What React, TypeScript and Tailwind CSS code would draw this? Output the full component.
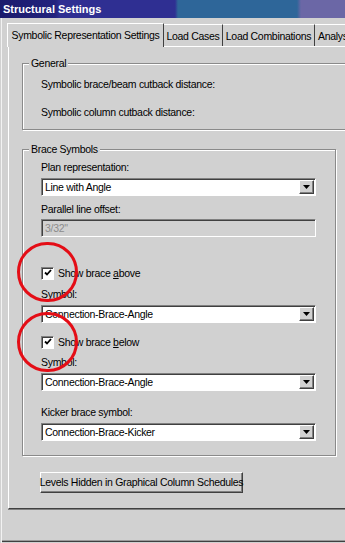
import React from 'react';

const ui = "font-['Liberation_Sans',Arial,sans-serif] text-[10.5px] tracking-[-0.3px] leading-[14px] text-black whitespace-nowrap";

function Select({ value }: { value: string }) {
  return (
    <div className="h-[18px] w-[275px] flex bg-white border border-t-[#808080] border-l-[#808080] border-b-white border-r-white shadow-[inset_1px_1px_0_#404040]">
      <div className="flex-1 pl-[3px] pt-[1px] leading-[15px] truncate">{value}</div>
      <div className="w-[15px] h-[14px] mt-[1px] mr-[1px] bg-[#d1d1d1] border border-t-white border-l-white border-b-[#404040] border-r-[#404040] shadow-[inset_-1px_-1px_0_#808080] flex items-center justify-center">
        <svg width="7" height="4" viewBox="0 0 7 4">
          <path d="M0 0h7L3.5 4z" fill="#000" />
        </svg>
      </div>
    </div>
  );
}

function Check({ hot, rest, pre }: { pre: string; hot: string; rest: string }) {
  return (
    <div className="flex items-center h-[14px] gap-[4px]">
      <div className="w-[13px] h-[13px] bg-white border border-t-[#808080] border-l-[#808080] border-b-white border-r-white shadow-[inset_1px_1px_0_#404040] flex items-center justify-center">
        <svg width="8" height="8" viewBox="0 0 8 8">
          <path d="M1 3.5l2 2 4-4.5" fill="none" stroke="#000" strokeWidth="1.8" />
        </svg>
      </div>
      <span>
        {pre}
        <span className="underline">{hot}</span>
        {rest}
      </span>
    </div>
  );
}

function Group({ title, className, children }: { title: string; className: string; children: React.ReactNode }) {
  return (
    <div className={`relative border border-[#8a8a8a] shadow-[1px_1px_0_#fff,inset_1px_1px_0_#fff] ${className}`}>
      <span className="absolute -top-[8px] left-[6px] px-[2px] bg-[#d1d1d1]">{title}</span>
      {children}
    </div>
  );
}

export default function App() {
  return (
    <div className={`w-[345px] h-[543px] overflow-hidden bg-[#d1d1d1] flex flex-col relative ${ui}`}>
      <div className="h-[18px] shrink-0 bg-[linear-gradient(90deg,#1b1b6c_0px,#23237e_55px,#2f2f92_60px,#2f2f92_175px,#2e6699_178px,#2e6699_297px,#6b67a6_301px,#6b67a6_345px)] pl-[3px] pt-[3px] font-bold text-[11px] tracking-normal leading-[13px] text-white">
        Structural Settings
      </div>

      <div className="flex-1 flex flex-col border-l border-[#f2f2f2] ml-[1px]">
        <div className="flex items-end pt-[4px] pl-[5px] h-[28px] shrink-0">
          <div className="shrink-0 relative z-10 h-[24px] w-[157px] -mb-[1px] bg-[#d1d1d1] border-t border-l border-white border-r border-r-[#404040] flex items-center justify-center pb-[1px]">
            Symbolic Representation Settings
          </div>
          <div className="shrink-0 h-[22px] w-[59px] border-t border-white border-r border-r-[#404040] flex items-center justify-center">Load Cases</div>
          <div className="shrink-0 h-[22px] w-[92px] border-t border-white border-r border-r-[#404040] flex items-center justify-center">Load Combinations</div>
          <div className="shrink-0 h-[22px] w-[80px] border-t border-white pl-[3px] flex items-center">Analysis</div>
        </div>

        <div className="ml-[6px] w-[400px] h-[463px] shrink-0 border-t border-l border-white border-b border-b-[#404040] shadow-[0_1px_0_#808080] pl-[13px]">
          <Group title="General" className="mt-[16px] w-[380px] h-[67px] pl-[18px] pt-[13px]">
            <div>Symbolic brace/beam cutback distance:</div>
            <div className="mt-[14px]">Symbolic column cutback distance:</div>
          </Group>

          <Group title="Brace Symbols" className="mt-[19px] w-[314px] h-[307px] pl-[18px] pt-[10px]">
            <div>Plan representation:</div>
            <div className="mt-[4px]">
              <Select value="Line with Angle" />
            </div>
            <div className="mt-[6px]">Parallel line offset:</div>
            <div className="mt-[3px] h-[18px] w-[275px] border border-t-[#808080] border-l-[#808080] border-b-white border-r-white shadow-[inset_1px_1px_0_#404040] pl-[3px] pt-[1px] leading-[15px] text-[#8c8c8c]">
              3/32"
            </div>
            <div className="mt-[29px]">
              <Check pre="Show brace " hot="a" rest="bove" />
            </div>
            <div className="mt-[7px]">Symbol:</div>
            <div className="mt-[4px]">
              <Select value="Connection-Brace-Angle" />
            </div>
            <div className="mt-[12px]">
              <Check pre="Show brace " hot="b" rest="elow" />
            </div>
            <div className="mt-[6px]">Symbol:</div>
            <div className="mt-[4px]">
              <Select value="Connection-Brace-Angle" />
            </div>
            <div className="mt-[14px]">Kicker brace symbol:</div>
            <div className="mt-[4px]">
              <Select value="Connection-Brace-Kicker" />
            </div>
          </Group>

          <div className="mt-[16px] ml-[18px] w-[203px] h-[21px] border border-t-white border-l-white border-b-[#404040] border-r-[#404040] shadow-[inset_-1px_-1px_0_#808080] flex items-center justify-center pb-[1px]">
            Levels Hidden in Graphical Column Schedules
          </div>
        </div>

        <div className="flex-1" />
        <div className="h-[1px] bg-[#9a9a9a] shrink-0" />
        <div className="h-[1px] bg-[#404040] shrink-0" />
        <div className="h-[1px] shrink-0" />
      </div>

      <div className="absolute left-[17px] top-[242px] w-[61px] h-[60px] rounded-full border-[3px] border-[#e40d16]" />
      <div className="absolute left-[17px] top-[312px] w-[61px] h-[60px] rounded-full border-[3px] border-[#e40d16]" />
    </div>
  );
}
